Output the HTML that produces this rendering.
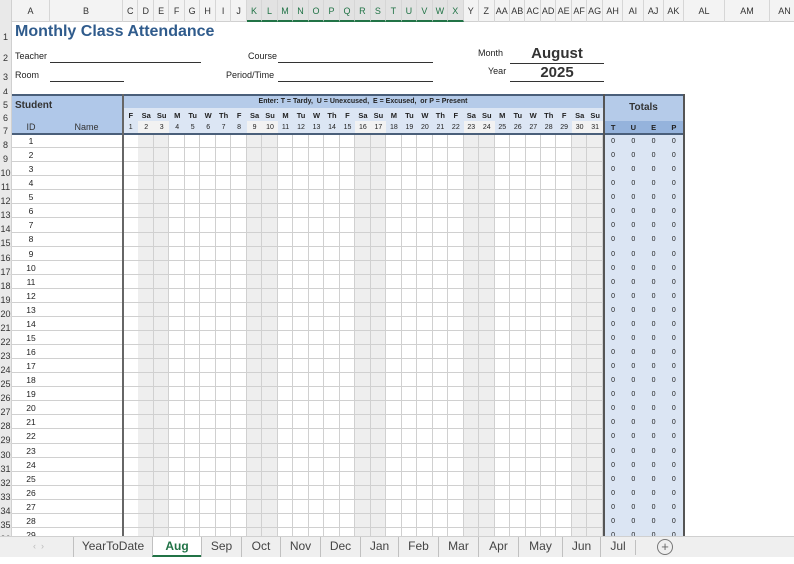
<!DOCTYPE html>
<html><head><meta charset="utf-8"><style>
body{margin:0;width:794px;height:557px;overflow:hidden;background:#fff;font-family:"Liberation Sans",sans-serif;position:relative}
div{position:absolute;box-sizing:border-box}
.c{text-align:center}
</style></head><body>
<div id="root" style="left:0;top:0;width:794px;height:557px"></div>
<script>
const R=document.getElementById('root');let h='';
function d(x,y,w,hh,st,t){h+=`<div style="left:${x}px;top:${y}px;width:${w}px;height:${hh}px;${st||''}">${t||''}</div>`;}
// column header
d(0,0,794,22,'background:#f3f3f3;border-bottom:1px solid #d0d0d0');
d(0,0,12,22,'background:#e9e9e9;border-right:1px solid #d0d0d0');
const cols=[['A',12,50],['B',50,123]];
const letters='CDEFGHIJKLMNOPQRSTUVWXYZ'.split('').concat(['AA','AB','AC','AD','AE','AF','AG']);
for(let i=0;i<31;i++)cols.push([letters[i],123+i*15.48,123+(i+1)*15.48]);
['AH','AI','AJ','AK'].forEach((l,i)=>cols.push([l,603+i*20.25,603+(i+1)*20.25]));
cols.push(['AL',684,725],['AM',725,770],['AN',770,800]);
cols.forEach(c=>{const sel='KLMNOPQRSTUVWX'.length&&['K','L','M','N','O','P','Q','R','S','T','U','V','W','X'].includes(c[0]);
d(c[1],0,c[2]-c[1],22,`border-right:1px solid #d6d6d6;font-size:9px;line-height:22px;text-align:center;color:${sel?'#217346':'#333'};${sel?'background:#e2e2e2;border-bottom:2px solid #217346;':''}`,c[0]);});
// rows
const rows=[];let ys=[22,45,64,82,94,108,121,134];
for(let i=0;i<7;i++)rows.push([i+1,ys[i],ys[i+1]]);
for(let i=0;i<30;i++)rows.push([8+i,134+i*14.07,134+(i+1)*14.07]);
rows.forEach(r=>d(0,r[1],12,r[2]-r[1]+0.5,'background:#e9e9e9;border-right:1px solid #d0d0d0;border-bottom:1px solid #dadada;font-size:9px;color:#333;text-align:center;line-height:'+(r[2]-r[1]+8)+'px',r[0]));
// title
d(15,23,300,22,'font-size:16px;font-weight:bold;color:#2f5b8c;font-family:"DejaVu Sans",sans-serif;letter-spacing:-0.3px;line-height:22px','Monthly Class Attendance');
const lab='font-size:9px;color:#222;font-family:"DejaVu Sans",sans-serif;';
d(15,51,50,12,lab,'Teacher');d(50,62,151,1,'background:#333');
d(15,70,50,12,lab,'Room');d(50,81,74,1,'background:#333');
d(248,51,50,12,lab,'Course');d(278,62,155,1,'background:#333');
d(226,70,60,12,lab,'Period/Time');d(278,81,155,1,'background:#333');
d(478,48,40,12,lab,'Month');d(488,66,40,12,lab,'Year');
d(510,63,94,1,'background:#333');d(510,81,94,1,'background:#333');
d(510,45,94,18,'font-size:15px;font-weight:bold;color:#333;text-align:center');h=h.replace(/<\/div>$/,'August</div>');
d(510,64,94,18,'font-size:15px;font-weight:bold;color:#333;text-align:center');h=h.replace(/<\/div>$/,'2025</div>');
// student header
d(12,95,111,39,'background:#b0c8e9');
d(15,100,60,14,'font-size:10px;font-weight:bold;color:#333;font-family:\"DejaVu Sans\",sans-serif','Student');
d(12,121,38,13,'font-size:9px;color:#333;text-align:center;line-height:13px','ID');
d(50,121,73,13,'font-size:9px;color:#333;text-align:center;line-height:13px','Name');
// day header
d(123,95,480,13,'background:#b5cbe9');
d(123,95,480,13,'font-size:7px;font-weight:bold;color:#222;text-align:center;line-height:13px','Enter: T = Tardy,&nbsp; U = Unexcused,&nbsp; E = Excused,&nbsp; or P = Present');
d(123,108,480,26,'background:#dce6f4');
const dn=['F','Sa','Su','M','Tu','W','Th'];
for(let i=0;i<31;i++){const x=123+i*15.48;const we=[1,2].includes(i%7);
 d(x,108,15.5,13,'font-size:7.5px;font-weight:bold;color:#222;text-align:center;line-height:16px',dn[i%7]);
 if(we)d(x,121,15.5,13,'background:#f2f2f2');
 d(x,121,15.5,13,'font-size:7px;color:#222;text-align:center;line-height:13px',i+1);
 d(x,134,15.5,410,'border-right:1px solid #d0d0d0;'+(we?'background:#eeeeee;':''));}
// totals header
d(603,95,81,26,'background:#b5cbe9');
d(603,95,81,26,'font-size:10px;font-weight:bold;color:#333;text-align:center;line-height:26px;font-family:\"DejaVu Sans\",sans-serif','Totals');
d(603,121,81,13,'background:#95b3dc');
['T','U','E','P'].forEach((l,i)=>d(603+i*20.25,121,20.25,13,'font-size:7.5px;font-weight:bold;color:#222;text-align:center;line-height:14px',l));
d(603,134,81,410,'background:#dbe5f3');
// body rows
for(let i=0;i<29;i++){const y=134+i*14.07;
 d(12,y,592,14.1,'border-bottom:1px solid #d0d0d0');
 d(12,y,38,14,'font-size:8.5px;color:#222;text-align:center;line-height:14px',i+1);
 for(let k=0;k<4;k++)d(603+k*20.25,y,20.25,14,'font-size:7px;color:#222;text-align:center;line-height:15px','0');}
// thick borders
d(12,94,672,1.5,'background:#4a5f7a');
d(12,133,672,1.5,'background:#4a5f7a');
d(122,94,2,450,'background:#666');
d(603,94,1.5,450,'background:#555');
d(683,94,1.5,450,'background:#555');
// tabs
d(0,536,794,21,'background:#efefef;border-top:1px solid #d0d0d0');
d(33,541,20,12,'font-size:9px;color:#bbb','‹&nbsp;&nbsp;›');
const tabs=[['YearToDate',73,152],['Aug',152,201],['Sep',201,241],['Oct',241,280],['Nov',280,320],['Dec',320,360],['Jan',360,398],['Feb',398,438],['Mar',438,478],['Apr',478,518],['May',518,562],['Jun',562,600],['Jul',600,635]];
tabs.forEach(t=>{const a=t[0]=='Aug';
 d(t[1],537,t[2]-t[1],20,`font-size:12px;text-align:center;line-height:18px;border-left:1px solid #c0c0c0;${a?'background:#fff;color:#217346;font-weight:bold;border-bottom:2px solid #217346;':'color:#444;'}`,t[0]);});
d(635,540,1,15,'background:#c0c0c0');
d(657,539,16,16,'border:1px solid #777;border-radius:50%;font-size:13px;line-height:13px;text-align:center;color:#666','+');
R.innerHTML=h;
</script>
</body></html>
